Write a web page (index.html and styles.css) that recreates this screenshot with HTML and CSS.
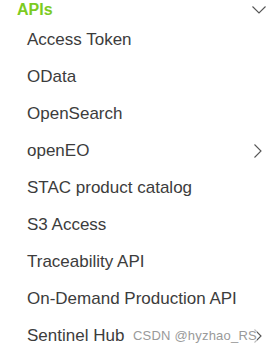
FILE: index.html
```html
<!DOCTYPE html>
<html>
<head>
<meta charset="utf-8">
<link rel="stylesheet" href="styles.css">
</head>
<body>
<nav class="menu">
  <div class="group-head">
    <span class="group-title">APIs</span>
    <svg class="chev-down" width="14" height="8" viewBox="0 0 14 8"><path d="M0.5 0.5 L7 7 L13.5 0.5" fill="none" stroke="#555" stroke-width="1.1"/></svg>
  </div>
  <ul class="items">
    <li class="item">Access Token</li>
    <li class="item">OData</li>
    <li class="item">OpenSearch</li>
    <li class="item">openEO <svg class="chev-right" width="8" height="14" viewBox="0 0 8 14"><path d="M0.5 0.5 L7 7 L0.5 13.5" fill="none" stroke="#555" stroke-width="1.1"/></svg></li>
    <li class="item">STAC product catalog</li>
    <li class="item">S3 Access</li>
    <li class="item">Traceability API</li>
    <li class="item">On-Demand Production API</li>
    <li class="item">Sentinel Hub <svg class="chev-right" width="8" height="14" viewBox="0 0 8 14"><path d="M0.5 0.5 L7 7 L0.5 13.5" fill="none" stroke="#555" stroke-width="1.1"/></svg></li>
  </ul>
  <div class="watermark">CSDN @hyzhao_RS</div>
</nav>
</body>
</html>
```
FILE: styles.css
```css
html, body {
  margin: 0;
  padding: 0;
  background: #fff;
}
body {
  font-family: "Liberation Sans", Arial, sans-serif;
  width: 273px;
  height: 354px;
  overflow: hidden;
}
.menu {
  position: relative;
  width: 273px;
}
.group-head {
  height: 20px;
  display: flex;
  align-items: center;
  justify-content: space-between;
  padding: 0 7px 0 17px;
}
.group-title {
  font-weight: bold;
  font-size: 16px;
  color: #7ccb22;
  line-height: 20px;
}
.chev-down {
  display: block;
}
.items {
  list-style: none;
  margin: 1px 0 0 0;
  padding: 0;
}
.item {
  height: 37px;
  line-height: 37px;
  font-size: 17px;
  color: #3c3c3c;
  padding-left: 27px;
  padding-right: 11px;
  display: flex;
  align-items: center;
  justify-content: space-between;
}
.chev-right {
  display: block;
}
.watermark {
  position: absolute;
  left: 133px;
  top: 327px;
  font-size: 13px;
  letter-spacing: 0.2px;
  color: #9a9a9a;
  line-height: 18px;
  background: rgba(255,255,255,0.6);
}
```
